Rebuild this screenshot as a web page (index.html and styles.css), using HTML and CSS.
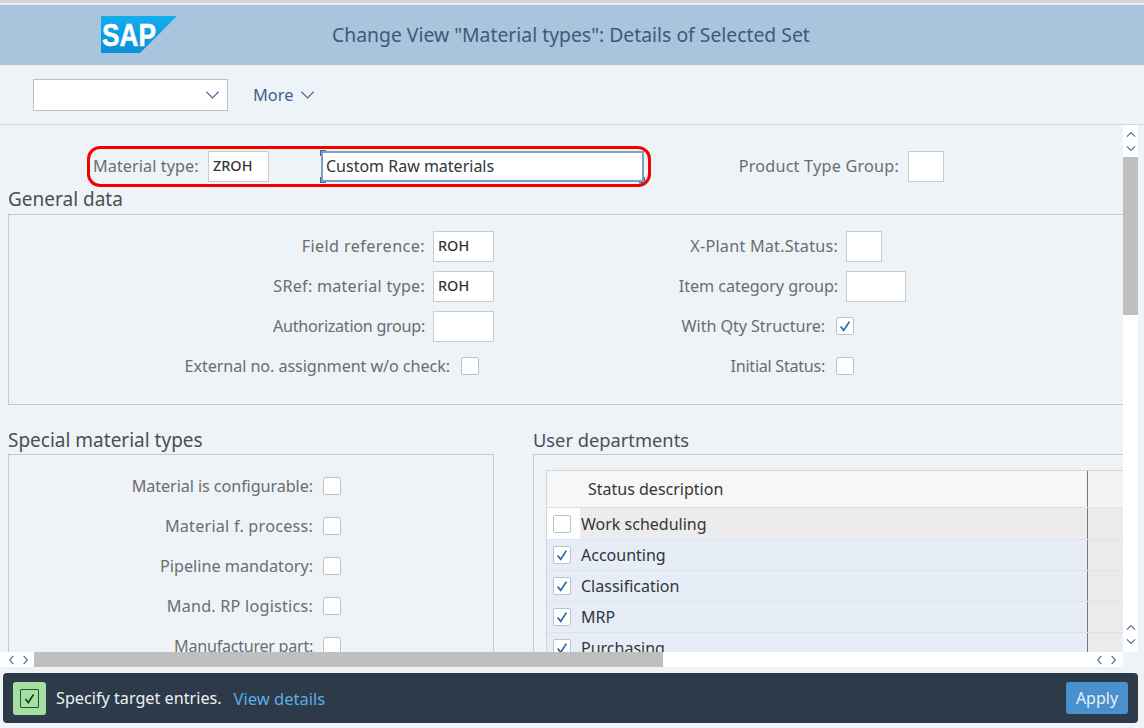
FILE: index.html
```html
<!DOCTYPE html>
<html lang="en">
<head>
<meta charset="utf-8">
<title>Change View "Material types": Details of Selected Set</title>
<link rel="stylesheet" href="styles.css">
</head>
<body>
<svg class="defs" aria-hidden="true">
  <symbol id="down" viewBox="0 0 16 10"><polyline points="1.5,1.5 8,8 14.5,1.5"/></symbol>
  <symbol id="up" viewBox="0 0 16 10"><polyline points="1.5,8.5 8,2 14.5,8.5"/></symbol>
  <symbol id="left" viewBox="0 0 10 16"><polyline points="8,1.5 2,8 8,14.5"/></symbol>
  <symbol id="right" viewBox="0 0 10 16"><polyline points="2,1.5 8,8 2,14.5"/></symbol>
  <symbol id="check" viewBox="0 0 16 16"><polyline points="3,8.5 6.5,13 13,3"/></symbol>
</svg>
<div class="stripe"></div>
<header class="shell">
  <svg class="logo" viewBox="0 0 76 37">
    <defs><linearGradient id="sapblue" x1="0" y1="0" x2="0" y2="1"><stop offset="0" stop-color="#12aef0"/><stop offset="1" stop-color="#0a8fd4"/></linearGradient></defs>
    <polygon points="0,0 76,0 39,37 0,37" fill="url(#sapblue)"/>
    <text class="logo-text" x="1" y="30" textLength="54" lengthAdjust="spacingAndGlyphs">SAP</text>
  </svg>
  <h1 class="title">Change View "Material types": Details of Selected Set</h1>
</header>
<div class="toolbar">
  <div class="select"><svg class="ico tool-chev"><use href="#down"/></svg></div>
  <div class="more">More <svg class="ico more-chev"><use href="#down"/></svg></div>
</div>
<div class="work">
  <main class="content">
    <div class="top-row">
      <div class="highlight">
        <span class="hl-label">Material type:</span>
        <span class="field f-zroh">ZROH</span>
        <span class="field f-desc">Custom Raw materials<i class="corner c1"></i><i class="corner c2"></i><i class="corner c3"></i></span>
      </div>
      <span class="label l-ptg sp-p2">Product Type Group:</span>
      <span class="field f-ptg"></span>
    </div>
    <h2 class="heading h-general">General data</h2>
    <section class="panel general">
      <div class="gcol">
        <div class="row"><span class="label l-a sp-p4">Field reference:</span><span class="field f-ref">ROH</span></div>
        <div class="row"><span class="label l-a sp-p2">SRef: material type:</span><span class="field f-ref">ROH</span></div>
        <div class="row"><span class="label l-a sp-m3">Authorization group:</span><span class="field f-ref"></span></div>
        <div class="row"><span class="label l-b sp-m1">External no. assignment w/o check:</span><span class="cb"></span></div>
      </div>
      <div class="gcol">
        <div class="row"><span class="label l-d sp-p2">X-Plant Mat.Status:</span><span class="field f-xp"></span></div>
        <div class="row"><span class="label l-d sp-m1">Item category group:</span><span class="field f-cat"></span></div>
        <div class="row"><span class="label l-e sp-m1">With Qty Structure:</span><span class="cb"><svg class="tick"><use href="#check"/></svg></span></div>
        <div class="row"><span class="label l-e sp-m3">Initial Status:</span><span class="cb"></span></div>
      </div>
    </section>
    <div class="lower">
      <div class="lcol">
        <h2 class="heading h-lower">Special material types</h2>
        <section class="panel special">
          <div class="row"><span class="label l-s sp-m1">Material is configurable:</span><span class="cb"></span></div>
          <div class="row"><span class="label l-s sp-p2">Material f. process:</span><span class="cb"></span></div>
          <div class="row"><span class="label l-s">Pipeline mandatory:</span><span class="cb"></span></div>
          <div class="row"><span class="label l-s sp-p2">Mand. RP logistics:</span><span class="cb"></span></div>
          <div class="row"><span class="label l-s sp-m3">Manufacturer part:</span><span class="cb"></span></div>
        </section>
      </div>
      <div class="rcol">
        <h2 class="heading h-lower">User departments</h2>
        <section class="panel depts">
          <div class="table">
            <div class="tr thead"><span class="sel"></span><span class="name">Status description</span><span class="extra"></span></div>
            <div class="tr off"><span class="sel"><span class="cb"></span></span><span class="name">Work scheduling</span><span class="extra"></span></div>
            <div class="tr"><span class="sel"><span class="cb"><svg class="tick"><use href="#check"/></svg></span></span><span class="name">Accounting</span><span class="extra"></span></div>
            <div class="tr"><span class="sel"><span class="cb"><svg class="tick"><use href="#check"/></svg></span></span><span class="name">Classification</span><span class="extra"></span></div>
            <div class="tr"><span class="sel"><span class="cb"><svg class="tick"><use href="#check"/></svg></span></span><span class="name">MRP</span><span class="extra"></span></div>
            <div class="tr"><span class="sel"><span class="cb"><svg class="tick"><use href="#check"/></svg></span></span><span class="name">Purchasing</span><span class="extra"></span></div>
          </div>
        </section>
      </div>
    </div>
  </main>
  <aside class="vbar">
    <div class="varrows"><svg class="ico arrow-v"><use href="#up"/></svg><svg class="ico arrow-v"><use href="#down"/></svg></div>
    <div class="vthumb"></div>
    <div class="varrows bottom"><svg class="ico arrow-v"><use href="#up"/></svg><svg class="ico arrow-v"><use href="#down"/></svg></div>
  </aside>
</div>
<div class="hbar">
  <div class="harrows"><svg class="ico arrow-h"><use href="#left"/></svg><svg class="ico arrow-h"><use href="#right"/></svg></div>
  <div class="hthumb"></div>
  <div class="harrows end"><svg class="ico arrow-h"><use href="#left"/></svg><svg class="ico arrow-h"><use href="#right"/></svg></div>
</div>
<footer class="msg">
  <div class="msg-icon"><span class="msg-box"><svg class="msg-tick"><use href="#check"/></svg></span></div>
  <span class="msg-text">Specify target entries.</span>
  <a class="msg-link">View details</a>
  <button class="apply">Apply</button>
</footer>
</body>
</html>
```
FILE: styles.css
```css
* { box-sizing: border-box; }
html, body { margin: 0; height: 100%; }
body {
  width: 1144px; height: 728px; overflow: hidden;
  background: #eef3f8; color: #32363a;
  font-family: "Noto Sans", "Open Sans", sans-serif; font-size: 16.2px;
}
.defs { display: none; }
.ico { fill: none; stroke: #4a6c96; stroke-width: 1.3; display: block; }

.stripe { height: 5px; background: linear-gradient(#d4d6d9 0 3px, #e8edf2 3px); }
.shell { height: 60px; background: #a9c4dd; display: flex; align-items: center; }
.logo { width: 76px; height: 37px; margin-left: 101px; margin-top: -1px; flex: none; }
.logo-text { font: bold 31px "Liberation Sans", sans-serif; fill: #fff; stroke: #fff; stroke-width: .5; }
.title { margin: -1px 0 0 155px; font-size: 19.35px; font-weight: 400; color: #3c5a7b; white-space: nowrap; line-height: 24px; }

.toolbar { height: 60px; border-bottom: 1px solid #c9daea; display: flex; align-items: center; padding: 0 0 0 33px; }
.select { width: 195px; height: 32px; background: #fff; border: 1px solid #bfc2c5; display: flex; align-items: center; justify-content: flex-end; padding-right: 7px; margin-top: 1px; }
.tool-chev { width: 15px; height: 10px; }
.more { margin-left: 25px; color: #41618a; font-size: 16.4px; display: flex; align-items: center; gap: 7px; }
.more-chev { width: 15px; height: 10px; }

.work { height: 527px; display: flex; }
.content { width: 1123px; height: 527px; overflow: hidden; flex: none; padding-top: 21px; }
.top-row { display: flex; align-items: center; height: 41px; padding-left: 87px; }
.highlight { width: 564px; height: 41px; border: 3px solid #f50000; border-radius: 13px; display: flex; align-items: center; padding-left: 3px; }
.hl-label { width: 109px; color: #6a6d70; white-space: nowrap; flex: none; line-height: 22px; margin-top: -2px; letter-spacing: .08px; }
.label { color: #6a6d70; text-align: right; white-space: nowrap; flex: none; line-height: 22px; margin-top: -1px; }
.sp-p4 { letter-spacing: .4px; }
.sp-p2 { letter-spacing: .22px; }
.sp-m1 { letter-spacing: -.09px; }
.sp-m3 { letter-spacing: -.3px; }
.field { height: 31px; background: #fff; border: 1px solid #c9cbcd; flex: none; display: flex; align-items: center; padding: 0 0 2px 4px; font-size: 14.4px; color: #32363a; font-weight: 500; }
.f-zroh { width: 61px; margin-left: 6px; }
.f-desc { width: 323px; margin-left: 52px; border-color: #7d9fc4; border-width: 2px; position: relative; font-weight: 400; font-size: 16px; padding-left: 3px; }
.corner { position: absolute; width: 6px; height: 6px; border: 1px solid #3d6a9e; }
.c1 { left: -3px; top: -3px; border-right: 0; border-bottom: 0; }
.c2 { left: -3px; bottom: -3px; border-right: 0; border-top: 0; }
.c3 { right: -3px; bottom: -3px; border-left: 0; border-top: 0; }
.l-ptg { width: 248px; }
.f-ptg { width: 36px; margin-left: 9px; }

.heading { margin: 0; font-size: 19px; font-weight: 400; color: #4c4f52; padding-left: 8px; white-space: nowrap; }
.h-general { height: 27px; line-height: 24px; }
.panel { border: 1px solid #c6c8ca; }
.general { margin-left: 8px; height: 191px; border-right: 0; padding-top: 11px; display: flex; }
.gcol:first-child { width: 500px; flex: none; }
.row { height: 40px; display: flex; align-items: center; }
.l-a { width: 416px; margin-right: 8px; }
.l-b { width: 441px; margin-right: 11px; }
.l-d { width: 329px; margin-right: 8px; }
.l-e { width: 316px; margin-right: 11px; }
.f-ref { width: 61px; }
.f-xp { width: 36px; }
.f-cat { width: 60px; }
.cb { width: 18px; height: 18px; background: #fff; border: 1px solid #bcc2c8; border-radius: 2px; flex: none; display: flex; align-items: center; justify-content: center; }
.tick { width: 14px; height: 14px; fill: none; stroke: #2265a8; stroke-width: 1.9; }

.lower { display: flex; }
.h-lower { height: 49px; padding-top: 24px; line-height: 22px; padding-left: 0; }
.rcol .h-lower { font-size: 18.3px; }
.lcol { width: 486px; margin-left: 8px; flex: none; }
.rcol { width: 590px; margin-left: 39px; flex: none; }
.special { padding-top: 11px; height: 260px; }
.l-s { width: 304px; margin-right: 10px; }
.depts { padding: 15px 0 0 12px; height: 260px; border-right: 0; }
.table { border-top: 1px solid #d4d6d8; border-left: 1px solid #d4d6d8; }
.tr { display: flex; height: 31px; background: #e6edf6; border-bottom: 1px solid #dde3ea; }
.sel { width: 33px; flex: none; display: flex; align-items: center; justify-content: center; padding-right: 3px; }
.name { width: 508px; flex: none; display: flex; align-items: center; padding-left: 1px; font-size: 16px; color: #32363a; border-right: 1px solid #77797c; line-height: 22px; }
.extra { flex: 1; background: #ebebeb; }
.thead { height: 37px; background: #f7f7f7; }
.thead .name { padding-left: 8px; }
.thead .extra { background: #f4f4f4; }
.off { height: 32px; background: #ececec; }
.off .sel { background: #fff; }

.vbar { width: 15px; height: 527px; background: #fff; flex: none; display: flex; flex-direction: column; }
.varrows { height: 32px; display: flex; flex-direction: column; align-items: center; justify-content: center; gap: 7px; }
.varrows.bottom { margin-top: auto; height: 36px; }
.arrow-v { width: 10px; height: 7px; stroke-width: 1.8; }
.vthumb { height: 158px; background: #bfbfbf; }

.hbar { width: 1123px; height: 15px; background: #fff; display: flex; align-items: center; }
.harrows { width: 34px; height: 15px; display: flex; align-items: center; justify-content: center; gap: 7px; padding-left: 3px; flex: none; }
.harrows.end { margin-left: auto; padding-left: 0; width: 27px; justify-content: flex-start; }
.arrow-h { width: 7px; height: 10px; stroke-width: 1.8; }
.hthumb { width: 629px; height: 15px; background: #bfbfbf; }

.msg { margin: 6px 0 0 3px; width: 1135px; height: 50px; background: #2c3a49; border-radius: 4px; display: flex; align-items: center; padding: 0 10px; }
.msg-icon { width: 33px; height: 33px; background: #a5e0a0; border-radius: 3px; display: flex; align-items: center; justify-content: center; flex: none; }
.msg-box { width: 19px; height: 19px; border: 1.5px solid #27503a; border-radius: 1px; display: flex; align-items: center; justify-content: center; }
.msg-tick { width: 13px; height: 13px; fill: none; stroke: #1d3b2a; stroke-width: 2; }
.msg-text { margin-left: 10px; color: #eef1f4; font-size: 16.2px; white-space: nowrap; }
.msg-link { margin-left: 12px; color: #5aaee6; font-size: 16.5px; white-space: nowrap; }
.apply { margin-left: auto; width: 62px; height: 32px; background: #4a90cc; color: #e8f1f8; border: 0; border-radius: 3px; font: inherit; font-size: 16px; padding: 0; }
```
